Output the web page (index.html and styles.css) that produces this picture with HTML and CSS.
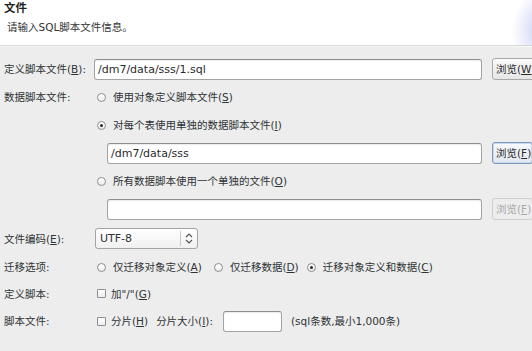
FILE: index.html
```html
<!DOCTYPE html>
<html lang="zh-CN">
<head>
<meta charset="utf-8">
<title>文件</title>
<link rel="stylesheet" href="styles.css">
</head>
<body>
<header class="banner">
  <div class="title">文件</div>
  <div class="subtitle">请输入SQL脚本文件信息。</div>
</header>
<main class="form">
  <div class="lbl">定义脚本文件(<u>B</u>):</div>
  <div class="ctl">
    <div class="field w-main">/dm7/data/sss/1.sql</div>
    <div class="btn btn-wide">浏览(<u>W</u>)</div>
  </div>

  <div class="lbl">数据脚本文件:</div>
  <div class="ctl"><span class="radio"></span><span class="opt">使用对象定义脚本文件(<u>S</u>)</span></div>

  <div class="lbl"></div>
  <div class="ctl"><span class="radio on"></span><span class="opt">对每个表使用单独的数据脚本文件(<u>I</u>)</span></div>

  <div class="lbl"></div>
  <div class="ctl indent">
    <div class="field w-sub">/dm7/data/sss</div>
    <div class="btn focus">浏览(<u>F</u>)</div>
  </div>

  <div class="lbl"></div>
  <div class="ctl"><span class="radio"></span><span class="opt">所有数据脚本使用一个单独的文件(<u>O</u>)</span></div>

  <div class="lbl"></div>
  <div class="ctl indent">
    <div class="field w-sub"></div>
    <div class="btn disabled">浏览(<u>F</u>)</div>
  </div>

  <div class="lbl">文件编码(<u>E</u>):</div>
  <div class="ctl">
    <div class="select">
      <span class="sel-val">UTF-8</span>
      <span class="sel-arrow">
        <svg width="8" height="11" viewBox="0 0 8 11"><path d="M1 4 L4 1 L7 4 M1 7 L4 10 L7 7" fill="none" stroke="#555" stroke-width="1.2"/></svg>
      </span>
    </div>
  </div>

  <div class="lbl">迁移选项:</div>
  <div class="ctl group">
    <span class="item"><span class="radio"></span><span class="opt">仅迁移对象定义(<u>A</u>)</span></span>
    <span class="item"><span class="radio"></span><span class="opt">仅迁移数据(<u>D</u>)</span></span>
    <span class="item last"><span class="radio on"></span><span class="opt">迁移对象定义和数据(<u>C</u>)</span></span>
  </div>

  <div class="lbl">定义脚本:</div>
  <div class="ctl"><span class="check"></span><span class="opt">加"/"(<u>G</u>)</span></div>

  <div class="lbl">脚本文件:</div>
  <div class="ctl">
    <span class="check"></span><span class="opt">分片(<u>H</u>)</span>
    <span class="opt size-lbl">分片大小(<u>I</u>):</span>
    <div class="field w-size"></div>
    <span class="opt hint">(sql条数,最小1,000条)</span>
  </div>
</main>
</body>
</html>
```

FILE: styles.css
```css
html, body {
  margin: 0;
  padding: 0;
  width: 532px;
  height: 351px;
  overflow: hidden;
  background: #ededed;
}
body {
  font-family: "DejaVu Sans", "Noto Sans CJK SC", sans-serif;
  font-size: 10.5px;
  color: #2e3436;
}
u { text-decoration: underline; text-underline-offset: 1px; }

.banner {
  height: 46px;
  box-sizing: border-box;
  background:
    radial-gradient(ellipse 36px 44px at 103% 68%, rgba(168,178,228,0.95), rgba(206,212,244,0.65) 50%, rgba(255,255,255,0) 100%),
    #ffffff;
  border-bottom: 1px solid #d6d6d6;
  padding: 1px 0 0 4px;
}
.title {
  font-weight: bold;
  font-size: 11.5px;
  line-height: 14px;
  color: #1e1e1e;
}
.subtitle {
  margin: 5px 0 0 3px;
  line-height: 14px;
  color: #333;
}

.form {
  display: grid;
  grid-template-columns: 90px 1fr;
  grid-template-rows: 28px 28px 28px 28px 28px 28px 31px 26px 27px 28px;
  align-items: center;
  padding: 8px 0 0 4px;
  border-top: 1px solid #f8f8f8;
}
.lbl {
  white-space: nowrap;
  line-height: 14px;
}
.ctl {
  display: flex;
  align-items: center;
  white-space: nowrap;
  line-height: 14px;
}
.indent { padding-left: 13px; }

.field {
  box-sizing: border-box;
  height: 21px;
  background: #ffffff;
  border: 1px solid #a3a3a3;
  border-top-color: #8e8e8e;
  border-radius: 3px;
  box-shadow: inset 0 1px 1px rgba(0,0,0,0.08);
  padding: 0 3px;
  line-height: 19px;
  font-size: 11px;
  color: #2a2a2a;
  flex: none;
}
.w-main { width: 388px; }
.w-sub { width: 375px; }
.w-size { width: 59px; margin-left: 10px; }

.btn {
  box-sizing: border-box;
  flex: none;
  margin-left: 10px;
  height: 22px;
  width: 41px;
  border: 1px solid #a8a8a8;
  border-radius: 3px;
  background: linear-gradient(#fafafa, #e6e6e6);
  line-height: 20px;
  padding-left: 3px;
  color: #2a2a2a;
}
.btn-wide { width: 50px; }
.btn.focus {
  border-color: #7d98bd;
  box-shadow: inset 0 0 0 1px #c9d8ec;
  background: linear-gradient(#f7f9fc, #e3e8ef);
}
.btn.disabled {
  color: #a9a9a9;
  border-color: #cfcfcf;
  background: #ededed;
}

.radio {
  box-sizing: border-box;
  flex: none;
  width: 9px;
  height: 9px;
  border: 1px solid #8d8d8d;
  border-radius: 50%;
  background: linear-gradient(#ffffff, #ececec);
  margin-left: 3px;
  margin-right: 7px;
  position: relative;
}
.radio.on::after {
  content: "";
  position: absolute;
  left: 2px;
  top: 2px;
  width: 3px;
  height: 3px;
  border-radius: 50%;
  background: #2a2a2a;
}
.check {
  box-sizing: border-box;
  flex: none;
  width: 9px;
  height: 9px;
  border: 1px solid #8d8d8d;
  border-radius: 1px;
  background: linear-gradient(#ffffff, #ededed);
  margin-left: 3px;
  margin-right: 5px;
}

.group .item { display: flex; align-items: center; margin-right: 4px; }
.group .item + .item .radio { margin-left: 8px; }
.group .item.last .radio { margin-left: 4px; }

.size-lbl { margin-left: 8px; }
.hint { margin-left: 9px; }

.select {
  box-sizing: border-box;
  display: flex;
  align-items: stretch;
  width: 103px;
  height: 21px;
  border: 1px solid #a3a3a3;
  border-radius: 3px;
  background: linear-gradient(#ffffff, #f0f0f0);
  margin-left: 1px;
}
.sel-val {
  flex: 1;
  padding-left: 4px;
  line-height: 19px;
  font-size: 11px;
}
.sel-arrow {
  width: 16px;
  border-left: 1px solid #c8c8c8;
  margin: 2px 0;
  display: flex;
  align-items: center;
  justify-content: center;
}
```
